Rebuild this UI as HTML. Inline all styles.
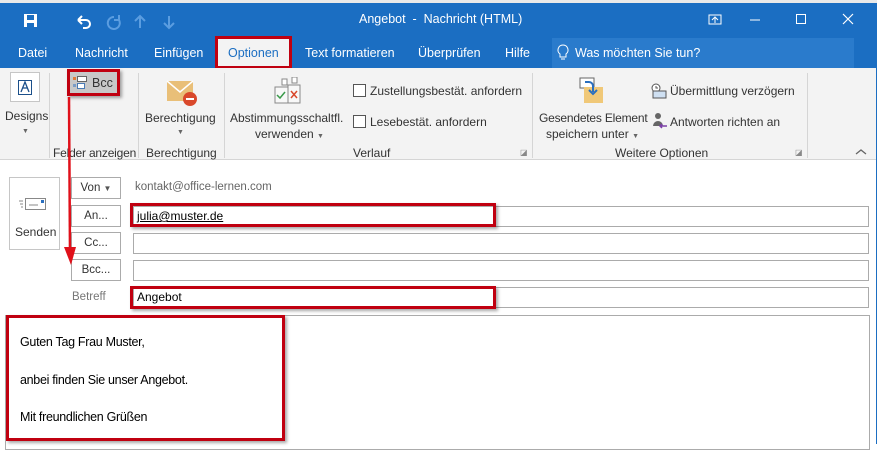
<!DOCTYPE html>
<html><head><meta charset="utf-8"><style>
*{margin:0;padding:0;box-sizing:border-box}
body{width:877px;height:444px;overflow:hidden;background:#fff;font-family:"Liberation Sans",sans-serif;font-size:12px;color:#333;position:relative}
.a{position:absolute;white-space:nowrap}
.blue{background:#1b6ec2}
.tab{color:#fff;font-size:12.5px;top:46px}
.rib{font-size:12px;color:#333}
.fld{position:absolute;border:1px solid #ababab;background:#fff;height:21px}
.btn{position:absolute;border:1px solid #ababab;background:#fff;height:22px;font-size:11.5px;text-align:center;line-height:20px;color:#333}
.red{position:absolute;border:3px solid #c00010;box-shadow:2px 2px 3px rgba(0,0,0,.35)}
.cb{position:absolute;width:13px;height:13px;border:1px solid #555;background:#fff}
.sep{position:absolute;width:1px;background:#d5d5d5;top:73px;height:85px}
.body{font-family:"Liberation Sans",sans-serif;font-size:12.5px;color:#000;letter-spacing:-0.3px}
</style></head><body>
<div class="a" style="left:0;top:0;width:877px;height:3px;background:#e9e9e9"></div>
<div class="a blue" style="left:0;top:3px;width:877px;height:65px"></div>
<div class="a" style="left:552px;top:38px;width:302px;height:30px;background:#2a7bcc"></div>
<svg class="a" style="left:22px;top:12px" width="170" height="18">
<rect x="2" y="2" width="13" height="13" fill="#fff"/><rect x="5" y="3" width="7" height="5" fill="#1b6ec2"/><rect x="5" y="11" width="7" height="4" fill="#1b6ec2"/>
<path d="M56 8h8a4 4 0 0 1 0 8h-3M56 8l4-4M56 8l4 4" stroke="#fff" stroke-width="2" fill="none"/>
<path d="M92 5a6 6 0 1 0 5 3M97 3v5h-5" stroke="#5b9de0" stroke-width="2" fill="none"/>
<path d="M118 4v12M113 9l5-5 5 5" stroke="#5b9de0" stroke-width="2" fill="none"/>
<path d="M147 4v12M142 11l5 5 5-5" stroke="#5b9de0" stroke-width="2" fill="none"/>
<path d="M172 8h6M172 11h6l-3 3z" stroke="#fff" stroke-width="1.2" fill="#fff"/>
</svg>
<div class="a" style="left:359px;top:12px;color:#fff;font-size:12.5px">Angebot&nbsp; -&nbsp; Nachricht (HTML)</div>
<svg class="a" style="left:700px;top:10px" width="170" height="22">
<rect x="9" y="5" width="12" height="9" stroke="#fff" fill="none"/><path d="M15 13V8M12 10l3-3 3 3" stroke="#fff" fill="none"/>
<path d="M50 10h10" stroke="#fff"/>
<rect x="96.5" y="4.5" width="9" height="9" stroke="#fff" fill="none"/>
<path d="M143 4l10 10M153 4l-10 10" stroke="#fff" stroke-width="1.2"/>
</svg>
<div class="a tab" style="left:18px">Datei</div>
<div class="a tab" style="left:75px">Nachricht</div>
<div class="a tab" style="left:154px">Einfügen</div>
<div class="a" style="left:217px;top:38px;width:74px;height:31px;background:#f3f3f3"></div>
<div class="a tab" style="left:228px;color:#1b6ec2">Optionen</div>
<div class="red" style="left:215px;top:36px;width:77px;height:33px;box-shadow:none"></div>
<div class="a tab" style="left:305px">Text formatieren</div>
<div class="a tab" style="left:418px">Überprüfen</div>
<div class="a tab" style="left:505px">Hilfe</div>
<svg class="a" style="left:556px;top:44px" width="14" height="18"><path d="M7 1a5 5 0 0 0-3 9v3h6v-3a5 5 0 0 0-3-9zM5 15h4" stroke="#fff" fill="none"/></svg>
<div class="a tab" style="left:575px">Was möchten Sie tun?</div>
<div class="a" style="left:0;top:68px;width:877px;height:92px;background:#f3f3f3;border-bottom:1px solid #d5d5d5"></div>
<div class="a" style="left:876px;top:68px;width:1px;height:376px;background:#1b6ec2"></div>
<div class="a" style="left:10px;top:72px;width:30px;height:30px;border:1px solid #c6c6c6;background:#fff"></div>
<svg class="a" style="left:17px;top:79px" width="18" height="18"><rect x="1.5" y="1.5" width="13" height="14" stroke="#1b4f8a" fill="#fff"/><path d="M4 13l4-10 4 10M5.5 9h5" stroke="#1b4f8a" stroke-width="1.3" fill="none"/></svg>
<div class="a rib" style="left:5px;top:109px">Designs</div>
<div class="a" style="left:22px;top:128px;font-size:7px;color:#666">▼</div>
<div class="sep" style="left:49px"></div>
<div class="a" style="left:70px;top:72px;width:48px;height:22px;background:#c8c8c8"></div>
<svg class="a" style="left:72px;top:75px" width="16" height="16"><rect x="1" y="2" width="3" height="3" fill="#e07a3a"/><rect x="5.5" y="1.5" width="9" height="5" stroke="#666" fill="#fff"/><rect x="1" y="9" width="3" height="3" fill="#7a9cc6"/><rect x="5.5" y="8.5" width="7" height="5" stroke="#4a7bb5" fill="#fff"/></svg>
<div class="a rib" style="left:92px;top:76px;font-size:12.5px">Bcc</div>
<div class="red" style="left:67px;top:69px;width:53px;height:27px"></div>
<div class="a rib" style="left:53px;top:146px;letter-spacing:-0.2px">Felder anzeigen</div>
<div class="sep" style="left:138px"></div>
<svg class="a" style="left:165px;top:78px" width="34" height="30"><rect x="2" y="3" width="26" height="20" fill="#e9bf78"/><path d="M2 3l13 11 13-11" stroke="#fff" stroke-width="1.5" fill="none"/><circle cx="25" cy="21" r="7" fill="#d9482b"/><rect x="21" y="20" width="8" height="2" fill="#fff"/></svg>
<div class="a rib" style="left:145px;top:111px">Berechtigung</div>
<div class="a" style="left:177px;top:129px;font-size:7px;color:#666">▼</div>
<div class="a rib" style="left:146px;top:146px">Berechtigung</div>
<div class="sep" style="left:224px"></div>
<svg class="a" style="left:272px;top:77px" width="32" height="30"><rect x="10" y="2" width="5" height="6" stroke="#888" fill="#fff"/><rect x="20" y="0" width="5" height="6" stroke="#888" fill="#fff"/><rect x="3" y="10" width="13" height="16" stroke="#888" fill="#f8f8f8"/><rect x="16" y="8" width="12" height="18" stroke="#888" fill="#f8f8f8"/><path d="M5 18l3 3 5-6" stroke="#3a9a4a" stroke-width="1.5" fill="none"/><path d="M19 14l6 7M25 14l-6 7" stroke="#d9482b" stroke-width="1.5"/></svg>
<div class="a rib" style="left:230px;top:111px">Abstimmungsschaltfl.</div>
<div class="a rib" style="left:255px;top:127px">verwenden <span style="font-size:7px;color:#666">▼</span></div>
<div class="cb" style="left:353px;top:84px"></div>
<div class="a rib" style="left:370px;top:84px">Zustellungsbestät. anfordern</div>
<div class="cb" style="left:353px;top:115px"></div>
<div class="a rib" style="left:370px;top:115px">Lesebestät. anfordern</div>
<div class="a rib" style="left:353px;top:146px">Verlauf</div>
<div class="a" style="left:520px;top:148px;font-size:8px;color:#888">◪</div>
<div class="sep" style="left:532px"></div>
<svg class="a" style="left:577px;top:76px" width="30" height="30"><rect x="3" y="2" width="14" height="10" stroke="#666" fill="#fff"/><rect x="7" y="11" width="19" height="16" fill="#f0c878"/><path d="M8 6h4a4 4 0 0 1 4 4v6M12 14l4 4 4-4" stroke="#2a6fbf" stroke-width="2" fill="none"/></svg>
<div class="a rib" style="left:539px;top:111px;letter-spacing:-0.2px">Gesendetes Element</div>
<div class="a rib" style="left:546px;top:127px">speichern unter <span style="font-size:7px;color:#666">▼</span></div>
<svg class="a" style="left:650px;top:82px" width="18" height="18"><circle cx="6" cy="6" r="4" stroke="#555" fill="#fff"/><path d="M6 4v2h2" stroke="#555" fill="none"/><rect x="3" y="9" width="13" height="7" stroke="#555" fill="#cfe0f2"/></svg>
<div class="a rib" style="left:670px;top:84px">Übermittlung verzögern</div>
<svg class="a" style="left:652px;top:112px" width="16" height="18"><circle cx="6" cy="4" r="3" fill="#666"/><path d="M1 14a5 5 0 0 1 10 0z" fill="#666"/><path d="M15 14H8M10 12l-2 2 2 2" stroke="#7b3fa8" stroke-width="1.5" fill="none"/></svg>
<div class="a rib" style="left:670px;top:115px">Antworten richten an</div>
<div class="a rib" style="left:615px;top:146px">Weitere Optionen</div>
<div class="a" style="left:795px;top:148px;font-size:8px;color:#888">◪</div>
<div class="sep" style="left:807px"></div>
<svg class="a" style="left:855px;top:148px" width="12" height="8"><path d="M1 6l5-4 5 4" stroke="#666" stroke-width="1.3" fill="none"/></svg>
<div class="a" style="left:9px;top:177px;width:51px;height:73px;border:1px solid #c6c6c6;background:#fff"></div>
<svg class="a" style="left:19px;top:196px" width="30" height="16"><path d="M0 5h4M1 8h3M2 11h2" stroke="#888"/><rect x="6.5" y="2.5" width="20" height="11" stroke="#888" fill="#fff"/><rect x="22" y="4" width="3" height="3" fill="#2a6fbf"/><path d="M10 9h9" stroke="#888"/></svg>
<div class="a" style="left:15px;top:225px;font-size:12px">Senden</div>
<div class="btn" style="left:71px;top:177px;width:50px;height:22px">Von <span style="font-size:8px;color:#555">▼</span></div>
<div class="a" style="left:135px;top:181px;font-size:11.5px;color:#666">kontakt@office-lernen.com</div>
<div class="btn" style="left:71px;top:205px;width:50px">An...</div>
<div class="btn" style="left:71px;top:232px;width:50px">Cc...</div>
<div class="btn" style="left:71px;top:259px;width:50px">Bcc...</div>
<div class="a" style="left:72px;top:291px;font-size:11.5px;color:#777">Betreff</div>
<div class="fld" style="left:133px;top:206px;width:736px"></div>
<div class="fld" style="left:133px;top:233px;width:736px"></div>
<div class="fld" style="left:133px;top:260px;width:736px"></div>
<div class="fld" style="left:133px;top:287px;width:736px"></div>
<div class="a" style="left:137px;top:209px;font-size:12px;color:#000;text-decoration:underline">julia@muster.de</div>
<div class="a" style="left:137px;top:290px;font-size:12px;color:#000">Angebot</div>
<div class="red" style="left:130px;top:203px;width:366px;height:24px"></div>
<div class="red" style="left:130px;top:286px;width:366px;height:23px"></div>
<div class="a" style="left:5px;top:315px;width:865px;height:135px;border:1px solid #ababab"></div>
<div class="a body" style="left:20px;top:335px">Guten Tag Frau Muster,</div>
<div class="a body" style="left:20px;top:373px">anbei finden Sie unser Angebot.</div>
<div class="a body" style="left:20px;top:410px">Mit freundlichen Grüßen</div>
<div class="red" style="left:6px;top:315px;width:279px;height:126px"></div>
<svg class="a" style="left:60px;top:95px" width="20" height="180"><path d="M9 2L10 158" stroke="#e0101a" stroke-width="2.5"/><path d="M4 152l7 18 5-18z" fill="#e0101a"/></svg>
</body></html>
